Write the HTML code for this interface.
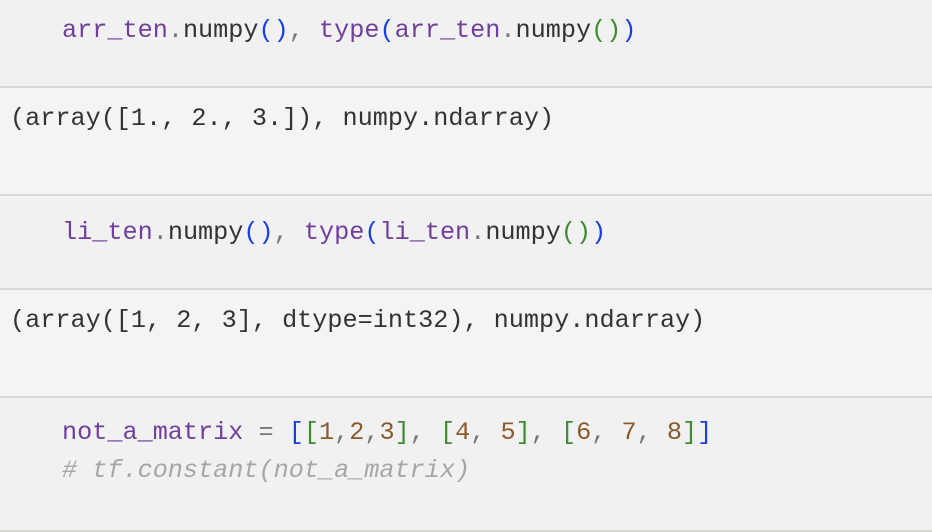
<!DOCTYPE html>
<html><head><style>
body{margin:0;width:932px;height:532px;overflow:hidden;background:#f1f1f1;font-family:"Liberation Mono",monospace;font-size:25.2px;position:relative}
.b{position:absolute;left:0;width:932px}
.c{background:#f1f1f1}.o{background:#f4f4f4}
.l{position:absolute;left:0;width:932px;height:2px;background:#d9d9d3}
.t{position:absolute;white-space:pre;line-height:38px;color:#333}
.v{color:#6f3f9b}.bl{color:#1a3fe0}.g{color:#3f8a32}.n{color:#8a5a2b}.p{color:#777}.cm{color:#a6a6a6;font-style:italic}
</style></head><body>
<div class="b c" style="top:0;height:87px"></div>
<div class="l" style="top:86px"></div>
<div class="b o" style="top:88px;height:106px"></div>
<div class="l" style="top:194px"></div>
<div class="b c" style="top:196px;height:92px"></div>
<div class="l" style="top:288px"></div>
<div class="b o" style="top:290px;height:106px"></div>
<div class="l" style="top:396px"></div>
<div class="b c" style="top:398px;height:132px"></div>
<div class="l" style="top:530px"></div>

<div class="t" style="left:62px;top:12px"><span class="v">arr_ten</span><span class="p">.</span>numpy<span class="bl">()</span><span class="p">,</span> <span class="v">type</span><span class="bl">(</span><span class="v">arr_ten</span><span class="p">.</span>numpy<span class="g">()</span><span class="bl">)</span></div>
<div class="t" style="left:10px;top:100px">(array([1., 2., 3.]), numpy.ndarray)</div>
<div class="t" style="left:62px;top:214px"><span class="v">li_ten</span><span class="p">.</span>numpy<span class="bl">()</span><span class="p">,</span> <span class="v">type</span><span class="bl">(</span><span class="v">li_ten</span><span class="p">.</span>numpy<span class="g">()</span><span class="bl">)</span></div>
<div class="t" style="left:10px;top:302px">(array([1, 2, 3], dtype=int32), numpy.ndarray)</div>
<div class="t" style="left:62px;top:414px"><span class="v">not_a_matrix</span> <span class="p">=</span> <span class="bl">[</span><span class="g">[</span><span class="n">1</span><span class="p">,</span><span class="n">2</span><span class="p">,</span><span class="n">3</span><span class="g">]</span><span class="p">,</span> <span class="g">[</span><span class="n">4</span><span class="p">,</span> <span class="n">5</span><span class="g">]</span><span class="p">,</span> <span class="g">[</span><span class="n">6</span><span class="p">,</span> <span class="n">7</span><span class="p">,</span> <span class="n">8</span><span class="g">]</span><span class="bl">]</span>
<span class="cm"># tf.constant(not_a_matrix)</span></div>
</body></html>
